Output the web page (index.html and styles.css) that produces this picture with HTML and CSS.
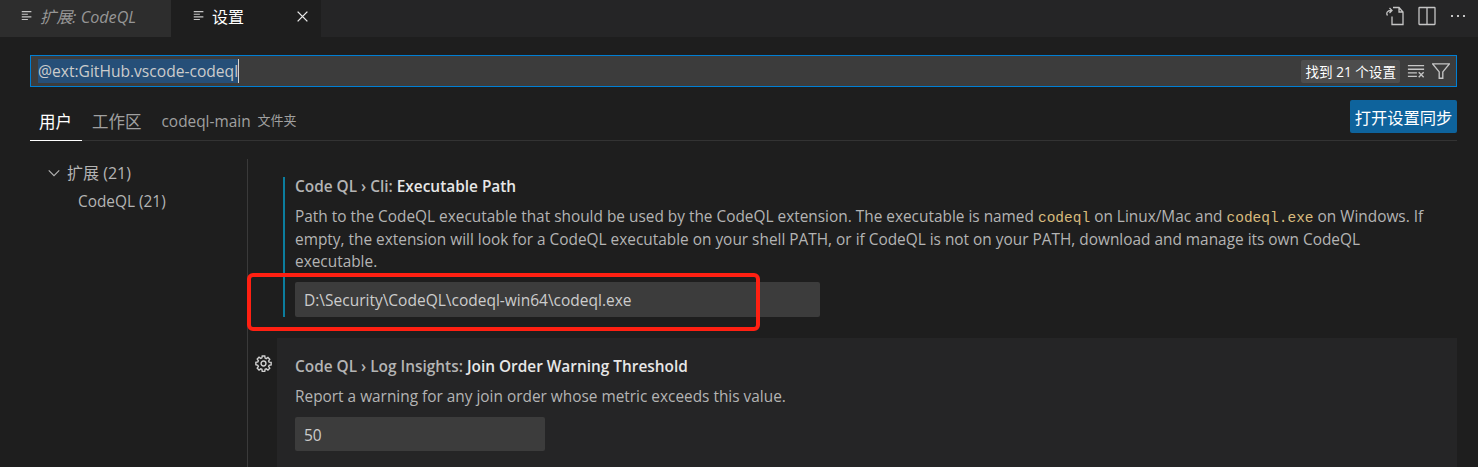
FILE: index.html
```html
<!DOCTYPE html>
<html lang="zh-CN">
<head>
    <meta charset="UTF-8">
    <title>设置</title>
    <link rel="stylesheet" href="styles.css">
</head>
<body>
    <div class="tabbar">
        <div class="tab tab-ext">
            <svg class="tab-icon" viewBox="0 0 16 16"><path d="M2 3h11M2 6h7M2 9h11M2 12h7" /></svg>
            <span>扩展: CodeQL</span>
        </div>
        <div class="tab tab-active">
            <svg class="tab-icon" viewBox="0 0 16 16"><path d="M2 3h11M2 6h7M2 9h11M2 12h7" /></svg>
            <span class="tab-name">设置</span>
            <svg class="tab-close" viewBox="0 0 16 16"><path d="M2 2l12 12M14 2L2 14" /></svg>
        </div>
        <div class="tab-actions">
            <svg class="action" viewBox="0 0 20 20"><path d="M8 1.500h6l4 4.500v12.500H7v-8M14 1.500V6h4M2.500 9.500C1 7.500 1.500 4.500 6.500 4.500M4.500 2l2.500 2.500L4.500 7" /></svg>
            <svg class="action" viewBox="0 0 20 20"><path d="M2.500 1.500h15a.5.5 0 0 1 .5.5v16a.5.5 0 0 1-.5.5h-15a.5.5 0 0 1-.5-.5V2a.5.5 0 0 1 .5-.5zM10 1.500v17" /></svg>
            <div class="dots"><i></i><i></i><i></i></div>
        </div>
    </div>

    <div class="editor">
        <div class="search">
            <span class="search-text">@ext:GitHub.vscode-codeql</span>
            <span class="caret"></span>
            <span class="count">找到 21 个设置</span>
            <svg class="search-icon clear" viewBox="0 0 20 20"><path d="M1 4h18M1 8h18M1 12h10M1 16h10M13 11.500l5.500 5.500M18.500 11.500L13 17" /></svg>
            <svg class="search-icon" viewBox="0 0 20 20"><path d="M.5 2h19l-7.500 9v7H8v-7z" /></svg>
        </div>

        <div class="scope-row">
            <div class="scope scope-active">用户</div>
            <div class="scope">工作区</div>
            <div class="scope scope-folder">codeql-main <small>文件夹</small></div>
            <button class="sync">打开设置同步</button>
        </div>

        <div class="body">
            <div class="tree">
                <div class="tree-group">
                    <svg class="chevron" viewBox="0 0 16 16"><path d="M2 5l6 6 6-6" /></svg>
                    扩展 (21)
                </div>
                <div class="tree-item">CodeQL (21)</div>
            </div>
            <div class="settings">
                <div class="setting setting-modified">
                    <div class="setting-title">Code QL › Cli: <b>Executable Path</b></div>
                    <div class="setting-desc">Path to the CodeQL executable that should be used by the CodeQL extension. The executable is named <code>codeql</code> on Linux/Mac and <code>codeql.exe</code> on Windows. If empty, the extension will look for a CodeQL executable on your shell PATH, or if CodeQL is not on your PATH, download and manage its own CodeQL executable.</div>
                    <div class="input input-wide">D:\Security\CodeQL\codeql-win64\codeql.exe</div>
                </div>
                <div class="setting-row">
                    <svg class="gear" viewBox="0 0 16 16"><path d="M6.800 1h2.400l.3 1.900 1.100.5 1.600-1.100 1.700 1.700-1.100 1.600.5 1.100 1.900.3v2.400l-1.900.3-.5 1.100 1.100 1.600-1.700 1.700-1.600-1.100-1.100.5-.3 1.900H6.800l-.3-1.900-1.100-.5-1.600 1.100-1.700-1.700 1.100-1.600-.5-1.100L.8 9.200V6.800l1.900-.3.5-1.100-1.100-1.600 1.700-1.700 1.600 1.100 1.100-.5z" /><circle cx="8" cy="8" r="2.300" /></svg>
                    <div class="setting setting-hover">
                        <div class="setting-title">Code QL › Log Insights: <b>Join Order Warning Threshold</b></div>
                        <div class="setting-desc">Report a warning for any join order whose metric exceeds this value.</div>
                        <div class="input input-narrow">50</div>
                    </div>
                </div>
            </div>
        </div>
    </div>

    <div class="annotation"></div>
</body>
</html>
```

FILE: styles.css
```css
html, body {
    margin: 0;
    height: 467px;
    overflow: hidden;
}
body {
    background: #1e1e1e;
    color: #cccccc;
    font-family: "Open Sans", "Noto Sans CJK SC", sans-serif;
    font-size: 15.400px;
    position: relative;
}
.tabbar {
    display: flex;
    height: 37px;
    background: #252526;
}
.tab {
    display: flex;
    align-items: center;
    height: 37px;
    box-sizing: border-box;
    padding: 0 0 5px 20px;
}
.tab-ext {
    width: 171px;
    background: #2d2d2d;
    color: #969696;
    font-style: italic;
    font-size: 16.200px;
}
.tab-active {
    width: 150px;
    padding-left: 21px;
    background: #1e1e1e;
    color: #ffffff;
    font-size: 16px;
}
.tab-icon {
    width: 14px;
    height: 14px;
    margin-right: 6px;
    fill: none;
    stroke: #c5c5c5;
    stroke-width: 1.300;
}
.tab-name {
    flex: 1;
}
.tab-close {
    width: 13px;
    height: 13px;
    margin-right: 12px;
    fill: none;
    stroke: #e8e8e8;
    stroke-width: 1.700;
}
.tab-actions {
    margin-left: auto;
    display: flex;
    align-items: center;
    gap: 12px;
    padding-right: 13px;
    padding-bottom: 6px;
}
.action {
    width: 20px;
    height: 20px;
    fill: none;
    stroke: #c5c5c5;
    stroke-width: 1.300;
}
.dots {
    display: flex;
    gap: 4px;
    margin-left: 2px;
}
.dots i {
    width: 2px;
    height: 2px;
    background: #c5c5c5;
}
.editor {
    padding: 18px 21px 0 30px;
}
.search {
    display: flex;
    align-items: center;
    height: 32px;
    box-sizing: border-box;
    background: #3c3c3c;
    border: 1px solid #007fd4;
    padding: 0 6px 0 7px;
    font-size: 15.600px;
}
.search-text {
    background: #264f78;
    line-height: 24px;
    height: 24px;
}
.caret {
    width: 1px;
    height: 24px;
    background: #d4d4d4;
}
.count {
    margin-left: auto;
    background: #4d4d4d;
    color: #ffffff;
    font-size: 13.600px;
    padding: 0 4px;
    line-height: 23px;
    height: 23px;
    border-radius: 2px;
    margin-right: 7px;
}
.search-icon {
    width: 18px;
    height: 18px;
    margin-left: 7px;
    fill: none;
    stroke: #c5c5c5;
    stroke-width: 1.500;
}
.search-icon.clear {
    margin-left: 0;
}
.scope-row {
    display: flex;
    align-items: flex-start;
    height: 40px;
    padding-top: 13px;
    border-bottom: 1px solid #333333;
    font-size: 16.500px;
    gap: 20px;
    color: #a0a0a0;
}
.scope {
    padding-top: 12px;
    line-height: 20px;
}
.scope-active {
    box-sizing: border-box;
    height: 41px;
    padding: 12px 10px 0 9px;
    margin-right: -10px;
    color: #ffffff;
    border-bottom: 1px solid #ffffff;
}
.scope-folder {
    font-size: 15.400px;
}
.scope small {
    font-size: 13px;
    margin-left: 3px;
    position: relative;
    top: -2px;
}
.sync {
    margin-left: auto;
    width: 107px;
    height: 33px;
    border: none;
    border-radius: 2px;
    background: #0e639c;
    color: #ffffff;
    font-family: inherit;
    font-size: 16.300px;
    padding: 0;
}
.body {
    display: flex;
    padding-top: 18px;
}
.tree {
    width: 218px;
    height: 320px;
    box-sizing: border-box;
    border-right: 1px solid #3a3a3a;
    color: #b4b4b4;
    line-height: 28px;
}
.tree-group {
    display: flex;
    align-items: center;
    gap: 6px;
    padding-left: 17px;
    color: #b4b4b4;
    font-size: 16px;
}
.chevron {
    width: 14px;
    height: 14px;
    fill: none;
    stroke: #b4b4b4;
    stroke-width: 1.300;
}
.tree-item {
    padding: 1px 0 0 48px;
}
.settings {
    flex: 1;
    min-width: 0;
}
.setting-modified {
    margin: 18px 0 0 35px;
    border-left: 2px solid #0c7d9d;
    padding-left: 10px;
    height: 140px;
    box-sizing: border-box;
}
.setting-title {
    color: #b4b4b4;
    font-weight: 600;
    font-size: 15.400px;
    line-height: 19px;
}
.setting-title b {
    color: #e7e7e7;
    font-weight: 600;
}
.setting-desc {
    margin-top: 10px;
    line-height: 22.500px;
    color: #b4b4b4;
    max-width: 1142px;
}
.setting-desc code {
    font-family: "Liberation Mono", monospace;
    font-size: 14.500px;
    line-height: 1;
    color: #d7ba7d;
}
.input {
    box-sizing: border-box;
    background: #3c3c3c;
    color: #cccccc;
    height: 35px;
    line-height: 33px;
    padding: 2px 0 0 9px;
    font-size: 15.500px;
    border-radius: 2px;
    margin-top: 8.500px;
}
.input-wide {
    width: 525px;
}
.input-narrow {
    width: 250px;
    height: 34px;
    line-height: 32px;
}
.setting-row {
    display: flex;
    margin-top: 21px;
}
.gear {
    width: 17px;
    height: 17px;
    margin: 17px 5px 0 7px;
    fill: none;
    stroke: #d0d0d0;
    stroke-width: 1.300;
    flex: none;
}
.setting-hover {
    flex: 1;
    height: 129px;
    background: #252526;
    padding: 19px 0 0 18px;
}
.annotation {
    position: absolute;
    left: 247px;
    top: 273px;
    width: 513px;
    height: 58px;
    box-sizing: border-box;
    border: 4px solid #ff2012;
    border-radius: 6px;
}
```
